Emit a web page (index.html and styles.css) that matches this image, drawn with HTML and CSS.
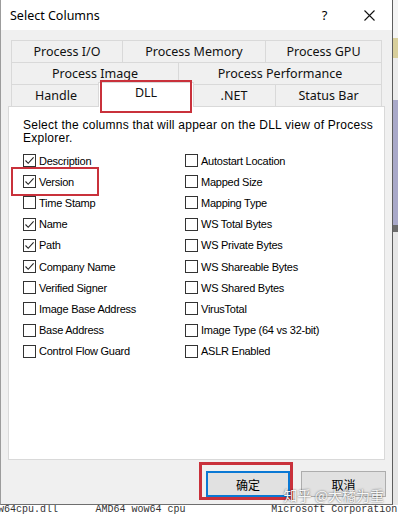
FILE: index.html
```html
<!DOCTYPE html>
<html lang="en">
<head>
    <meta charset="UTF-8">
    <title>Select Columns</title>
    <link rel="stylesheet" href="styles.css">
</head>
<body>
    <div class="screen">
        <div class="dialog">
            <div class="titlebar">
                <span class="title">Select Columns</span>
                <span class="help">?</span>
                <span class="close">
                    <svg width="11" height="11" viewBox="0 0 11 11"><path d="M0.5 0.5L10.5 10.5M10.5 0.5L0.5 10.5" stroke="#111" stroke-width="1.1" fill="none"/></svg>
                </span>
            </div>

            <div class="content">
                <div class="tabs">
                    <div class="tab-row">
                        <div class="tab t-io">Process I/O</div>
                        <div class="tab t-mem">Process Memory</div>
                        <div class="tab t-gpu">Process GPU</div>
                    </div>
                    <div class="tab-row">
                        <div class="tab t-img">Process Image</div>
                        <div class="tab t-perf">Process Performance</div>
                    </div>
                    <div class="tab-row last-row">
                        <div class="tab t-handle">Handle</div>
                        <div class="tab t-dll active">DLL</div>
                        <div class="tab t-net">.NET</div>
                        <div class="tab t-status">Status Bar</div>
                    </div>
                </div>

                <div class="panel">
                    <p class="intro">Select the columns that will appear on the DLL view of Process<br>Explorer.</p>
                    <div class="checks">
                        <label class="check"><span class="box on"><svg width="11" height="11" viewBox="0 0 11 11"><path d="M1.5 5.5L4.2 8.3L9.6 2.4" stroke="#222" stroke-width="1.1" fill="none"/></svg></span>Description</label>
                        <label class="check marked"><span class="box on"><svg width="11" height="11" viewBox="0 0 11 11"><path d="M1.5 5.5L4.2 8.3L9.6 2.4" stroke="#222" stroke-width="1.1" fill="none"/></svg></span>Version</label>
                        <label class="check"><span class="box"></span>Time Stamp</label>
                        <label class="check"><span class="box on"><svg width="11" height="11" viewBox="0 0 11 11"><path d="M1.5 5.5L4.2 8.3L9.6 2.4" stroke="#222" stroke-width="1.1" fill="none"/></svg></span>Name</label>
                        <label class="check"><span class="box on"><svg width="11" height="11" viewBox="0 0 11 11"><path d="M1.5 5.5L4.2 8.3L9.6 2.4" stroke="#222" stroke-width="1.1" fill="none"/></svg></span>Path</label>
                        <label class="check"><span class="box on"><svg width="11" height="11" viewBox="0 0 11 11"><path d="M1.5 5.5L4.2 8.3L9.6 2.4" stroke="#222" stroke-width="1.1" fill="none"/></svg></span>Company Name</label>
                        <label class="check"><span class="box"></span>Verified Signer</label>
                        <label class="check"><span class="box"></span>Image Base Address</label>
                        <label class="check"><span class="box"></span>Base Address</label>
                        <label class="check"><span class="box"></span>Control Flow Guard</label>

                        <label class="check"><span class="box"></span>Autostart Location</label>
                        <label class="check"><span class="box"></span>Mapped Size</label>
                        <label class="check"><span class="box"></span>Mapping Type</label>
                        <label class="check"><span class="box"></span>WS Total Bytes</label>
                        <label class="check"><span class="box"></span>WS Private Bytes</label>
                        <label class="check"><span class="box"></span>WS Shareable Bytes</label>
                        <label class="check"><span class="box"></span>WS Shared Bytes</label>
                        <label class="check"><span class="box"></span>VirusTotal</label>
                        <label class="check"><span class="box"></span>Image Type (64 vs 32-bit)</label>
                        <label class="check"><span class="box"></span>ASLR Enabled</label>
                    </div>
                </div>
            </div>

            <div class="footer">
                <button class="btn btn-ok">确定</button>
                <button class="btn">取消</button>
                <span class="watermark">知乎 @大橘为重</span>
            </div>
        </div>
        <div class="strip"></div>
    </div>

    <div class="behind">
        <span class="col-a">w64cpu.dll</span>
        <span class="col-b">AMD64 wow64 cpu</span>
        <span class="col-c">Microsoft Corporation</span>
    </div>
</body>
</html>
```

FILE: styles.css
```css
body {
    margin: 0;
    width: 398px;
    height: 517px;
    overflow: hidden;
    background: #fff;
    font-family: "Liberation Sans", Arial, sans-serif;
    color: #000;
}

.screen {
    display: flex;
}

.dialog {
    box-sizing: border-box;
    width: 393px;
    height: 505px;
    background: #f0f0f0;
    border-left: 1px solid #9c9c9c;
    border-right: 1px solid #5e5e5e;
    border-bottom: 1px solid #6e6e6e;
    display: flex;
    flex-direction: column;
}

.strip {
    flex: 1;
    height: 505px;
    background: linear-gradient(#f4f4f4 0 38px, #d8cf9c 38px 58px, #ececec 58px 100px, #a9a9c9 100px 225px, #6c6c6c 225px 232px, #e6e6e6 232px);
}

/* title bar */
.titlebar {
    height: 30px;
    background: #fff;
    display: flex;
    align-items: center;
}

.title {
    flex: 1;
    padding-left: 9px;
    font-family: "Noto Sans", "Open Sans", sans-serif;
    font-size: 12.5px;
}

.help {
    width: 45px;
    text-align: center;
    font-family: "Noto Sans", sans-serif;
    font-size: 13px;
}

.close {
    width: 45px;
    display: flex;
    justify-content: center;
}

/* tabs */
.content {
    padding: 10px 0 0 7px;
}

.tabs {
    margin-left: 3px;
    width: 371px;
}

.tab-row {
    display: flex;
    height: 22px;
}

.last-row {
    align-items: flex-end;
}

.tab {
    box-sizing: border-box;
    height: 22px;
    border: 1px solid #d9d9d9;
    border-right: none;
    border-bottom: none;
    display: flex;
    align-items: center;
    justify-content: center;
    font-family: "Noto Sans", "Open Sans", sans-serif;
    font-size: 12.5px;
    color: #111;
    background: #f0f0f0;
}

.tab:last-child {
    border-right: 1px solid #d9d9d9;
}

.t-io { width: 111px; }
.t-mem { width: 143px; }
.t-gpu { width: 117px; }
.t-img { width: 167px; }
.t-perf { width: 204px; }
.t-handle { width: 89px; }
.t-net { width: 83px; }
.t-status { width: 107px; }

.tab.active {
    position: relative;
    z-index: 1;
    width: 96px;
    height: 25px;
    margin: 0 -2px -1px -2px;
    border: 1px solid #d9d9d9;
    border-bottom: none;
    background: #fff;
    align-items: flex-start;
    padding-top: 1px;
}

.tab.active::after {
    content: "";
    position: absolute;
    top: -3px;
    bottom: -6px;
    left: 1px;
    right: 1px;
    border: 2px solid #c9313b;
}

/* panel */
.panel {
    box-sizing: border-box;
    width: 377px;
    height: 354px;
    background: #fff;
    border: 1px solid #d9d9d9;
    padding: 12px 0 0 14px;
}

.intro {
    margin: 0;
    font-size: 12px;
    line-height: 13px;
    letter-spacing: 0.25px;
    white-space: nowrap;
}

.checks {
    margin-top: 5px;
    display: grid;
    grid-template-columns: 162px 1fr;
    grid-template-rows: repeat(10, 21.2px);
    grid-auto-flow: column;
}

.check {
    position: relative;
    display: flex;
    align-items: center;
    gap: 3px;
    font-size: 11px;
    letter-spacing: -0.25px;
    white-space: nowrap;
}

.check.marked::after {
    content: "";
    position: absolute;
    left: -12px;
    top: -4px;
    bottom: -4px;
    width: 84px;
    border: 2px solid #c9313b;
}

.box {
    box-sizing: border-box;
    width: 13px;
    height: 13px;
    border: 1px solid #333;
    background: #fff;
    display: flex;
    align-items: center;
    justify-content: center;
}

/* buttons */
.footer {
    position: relative;
    display: flex;
    justify-content: flex-end;
    gap: 11px;
    padding: 11px 6px 0 0;
}

.btn {
    box-sizing: border-box;
    width: 85px;
    height: 26px;
    border: 1px solid #adadad;
    background: #e1e1e1;
    font-family: "Noto Sans CJK SC", sans-serif;
    font-size: 12px;
    color: #000;
    padding: 0;
}

.btn-ok {
    position: relative;
    width: 84px;
    border: 2px solid #0a78d4;
}

.btn-ok::after {
    content: "";
    position: absolute;
    left: -9px;
    right: -5px;
    top: -11px;
    bottom: -5px;
    border: 3px solid #c9313b;
}

.watermark {
    position: absolute;
    right: 8px;
    bottom: -8px;
    font-family: "Noto Sans CJK SC", sans-serif;
    font-size: 14px;
    color: rgba(255, 255, 255, 0.95);
    text-shadow: 0 0 2px rgba(0, 0, 0, 0.7);
}

/* window behind the dialog */
.behind {
    display: flex;
    height: 12px;
    overflow: hidden;
    font-family: "Liberation Mono", monospace;
    font-size: 10px;
    line-height: 9px;
    color: #333;
}

.col-a { width: 100px; margin-left: -2px; }
.col-b { width: 180px; }
.col-c { width: 130px; }
```
